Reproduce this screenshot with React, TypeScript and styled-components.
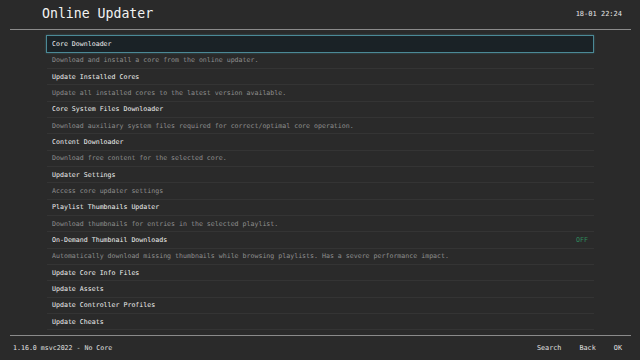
import styled, { createGlobalStyle } from "styled-components";

type Entry = {
  label: string;
  desc?: string;
  value?: string;
};

const entries: Entry[] = [
  {
    label: "Core Downloader",
    desc: "Download and install a core from the online updater.",
  },
  {
    label: "Update Installed Cores",
    desc: "Update all installed cores to the latest version available.",
  },
  {
    label: "Core System Files Downloader",
    desc: "Download auxiliary system files required for correct/optimal core operation.",
  },
  {
    label: "Content Downloader",
    desc: "Download free content for the selected core.",
  },
  { label: "Updater Settings", desc: "Access core updater settings" },
  {
    label: "Playlist Thumbnails Updater",
    desc: "Download thumbnails for entries in the selected playlist.",
  },
  {
    label: "On-Demand Thumbnail Downloads",
    value: "OFF",
    desc: "Automatically download missing thumbnails while browsing playlists. Has a severe performance impact.",
  },
  { label: "Update Core Info Files" },
  { label: "Update Assets" },
  { label: "Update Controller Profiles" },
  { label: "Update Cheats" },
];

function App() {
  return (
    <>
      <GlobalStyle />
      <Screen>
        <Header>
          <Title>Online Updater</Title>
          <Clock>18-01 22:24</Clock>
        </Header>
        <Rule />
        <List>
          {entries.map((entry, i) => (
            <Entry key={entry.label}>
              <Row $selected={i === 0}>
                <Label>{entry.label}</Label>
                {entry.value && <Value>{entry.value}</Value>}
              </Row>
              {entry.desc && (
                <Row>
                  <Desc>{entry.desc}</Desc>
                </Row>
              )}
            </Entry>
          ))}
        </List>
        <Rule />
        <Footer>
          <Version>1.16.0 msvc2022 - No Core</Version>
          <Hints>
            <Hint>Search</Hint>
            <Hint>Back</Hint>
            <Hint>OK</Hint>
          </Hints>
        </Footer>
      </Screen>
    </>
  );
}

export default App;

const GlobalStyle = createGlobalStyle`
  html, body {
    margin: 0;
    padding: 0;
    background: #2a2a2a;
  }
  * {
    box-sizing: border-box;
  }
`;

const Screen = styled.div`
  width: 640px;
  height: 360px;
  background: #2a2a2a;
  display: flex;
  flex-direction: column;
  font-family: "DejaVu Sans Mono", "Liberation Mono", monospace;
  overflow: hidden;
`;

const Header = styled.div`
  height: 29px;
  display: flex;
  align-items: center;
  justify-content: space-between;
  padding: 0 18px 1px 42px;
`;

const Title = styled.div`
  font-size: 13.2px;
  color: #f2f2f2;
  line-height: 1;
`;

const Clock = styled.div`
  font-size: 7px;
  color: #e6e6e6;
  line-height: 1;
`;

const Rule = styled.div`
  height: 1px;
  margin: 0 9px 0 10px;
  background: #8a8a8a;
  flex-shrink: 0;
`;

const List = styled.div`
  margin: 6.3px 0 0 47px;
  width: 547px;
  height: 298.7px;
  display: flex;
  flex-direction: column;
`;

const Entry = styled.div`
  display: flex;
  flex-direction: column;
`;

const Row = styled.div<{ $selected?: boolean }>`
  position: relative;
  height: 16.33px;
  flex-shrink: 0;
  display: flex;
  align-items: center;
  justify-content: space-between;
  padding: 0 6px 0 5px;
  border-bottom: 1px solid #343434;

  ${({ $selected }) =>
    $selected &&
    `
    &::before {
      content: "";
      position: absolute;
      left: -1px;
      right: 0;
      top: -1.3px;
      bottom: -1.7px;
      border: 1.5px solid #4b8996;
      background: #1a2226;
      box-shadow: 0 0 2px rgba(75, 137, 150, 0.5);
    }
    & > * {
      position: relative;
    }
  `}
`;

const Label = styled.span`
  font-size: 6.6px;
  color: #f0f0f0;
  white-space: nowrap;
`;

const Desc = styled.span`
  font-size: 6.6px;
  color: #8e8e8e;
  white-space: nowrap;
`;

const Value = styled.span`
  font-size: 6.6px;
  color: #2f8a5e;
`;

const Footer = styled.div`
  flex: 1;
  display: flex;
  align-items: center;
  justify-content: space-between;
  padding: 0 18px 0 13px;
`;

const Version = styled.span`
  font-size: 6.6px;
  color: #e0e0e0;
`;

const Hints = styled.div`
  display: flex;
  gap: 18px;
`;

const Hint = styled.span`
  font-size: 6.8px;
  color: #e0e0e0;
`;
